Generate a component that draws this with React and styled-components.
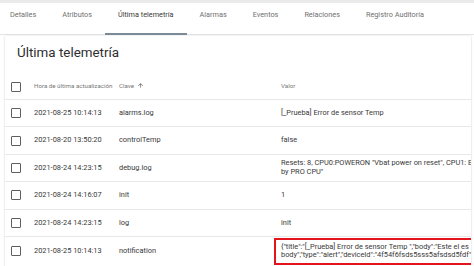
import React from "react";
import styled, { createGlobalStyle } from "styled-components";

const Global = createGlobalStyle`
  html, body { margin: 0; padding: 0; background: #fff; }
  body { font-family: Roboto, "Noto Sans", sans-serif; width: 474px; height: 266px; overflow: hidden; }
`;

const TopStrip = styled.div`
  height: 3px;
  background: #ebebeb;
`;

const TabBar = styled.nav`
  display: flex;
  height: 32px;
  box-sizing: border-box;
  border-bottom: 1px solid #e4e4e4;
  margin-left: -3px;
`;

const Tab = styled.div`
  position: relative;
  padding: 7px 13px 0;
  font-size: 7.3px;
  color: ${(p) => (p.$active ? "#3a3a3a" : "#707070")};
  white-space: nowrap;
  &::after {
    content: "";
    display: ${(p) => (p.$active ? "block" : "none")};
    position: absolute;
    left: 0;
    right: 0;
    bottom: -1px;
    height: 2px;
    background: #7b8a98;
  }
`;

const Card = styled.section`
  margin: 1px 3px 0 5px;
  background: #fff;
  box-shadow: 0 0 2px rgba(0, 0, 0, 0.12), 0 1px 2px rgba(0, 0, 0, 0.08);
  overflow: hidden;
  height: 240px;
`;

const Title = styled.h2`
  margin: 0;
  padding: 9px 0 0 12px;
  height: 29px;
  font-size: 13.4px;
  font-weight: 400;
  color: #2e2e2e;
  line-height: 16px;
`;

const Row = styled.div`
  display: grid;
  grid-template-columns: 23px 85px 162px 315px;
  align-items: center;
  height: ${(p) => (p.$head ? "26px" : p.$tall ? "30px" : "27.4px")};
  box-sizing: border-box;
  border-bottom: 1px solid #e8e8e8;
  padding-left: 6px;
  font-size: ${(p) => (p.$head ? "6.2px" : "7.4px")};
  color: ${(p) => (p.$head ? "#777" : "#383838")};
`;

const Cell = styled.div`
  white-space: ${(p) => (p.$wrap ? "normal" : "nowrap")};
  line-height: 8.5px;
`;

const Box = styled.span`
  display: block;
  width: 10px;
  height: 10px;
  box-sizing: border-box;
  border: 1.4px solid #5f5f5f;
  border-radius: 1px;
`;

const SortArrow = styled.svg`
  width: 7px;
  height: 7px;
  vertical-align: -1px;
  margin-left: 3px;
`;

const Highlight = styled.span`
  display: inline-block;
  margin-left: -7px;
  padding: 3px 5px 3px 5px;
  border: 2px solid #e3141c;
  line-height: 8.5px;
`;

const rows = [
  ["2021-08-25 10:14:13", "alarms.log", "[_Prueba] Error de sensor Temp"],
  ["2021-08-20 13:50:20", "controlTemp", "false"],
  [
    "2021-08-24 14:23:15",
    "debug.log",
    'Resets: 8, CPU0:POWERON "Vbat power on reset", CPU1: EXT_CPU_RESET "Reset of APP CPU by PRO CPU"',
  ],
  ["2021-08-24 14:16:07", "init", "1"],
  ["2021-08-24 14:23:15", "log", "init"],
];

const tabs = [
  "Detalles",
  "Atributos",
  "Última telemetría",
  "Alarmas",
  "Eventos",
  "Relaciones",
  "Registro Auditoría",
];

export default function App() {
  return (
    <>
      <Global />
      <TopStrip />
      <TabBar>
        {tabs.map((t) => (
          <Tab key={t} $active={t === "Última telemetría"}>
            {t}
          </Tab>
        ))}
      </TabBar>
      <Card>
        <Title>Última telemetría</Title>
        <Row $head>
          <Cell>
            <Box />
          </Cell>
          <Cell>Hora de última actualización</Cell>
          <Cell>
            Clave
            <SortArrow viewBox="0 0 24 24">
              <path d="M4 12l1.41 1.41L11 7.83V20h2V7.83l5.58 5.59L20 12l-8-8-8 8z" fill="#555" />
            </SortArrow>
          </Cell>
          <Cell>Valor</Cell>
        </Row>
        {rows.map(([d, k, v]) => (
          <Row key={k}>
            <Cell>
              <Box />
            </Cell>
            <Cell>{d}</Cell>
            <Cell>{k}</Cell>
            <Cell $wrap>{v}</Cell>
          </Row>
        ))}
        <Row $tall>
          <Cell>
            <Box />
          </Cell>
          <Cell>2021-08-25 10:14:13</Cell>
          <Cell>notification</Cell>
          <Cell $wrap>
            <Highlight>
              {'{"title":"[_Prueba] Error de sensor Temp ","body":"Este el es body","type":"alert","deviceId":"4f54f6fsds5sss5afsdsd5fdf"}'}
            </Highlight>
          </Cell>
        </Row>
      </Card>
    </>
  );
}
